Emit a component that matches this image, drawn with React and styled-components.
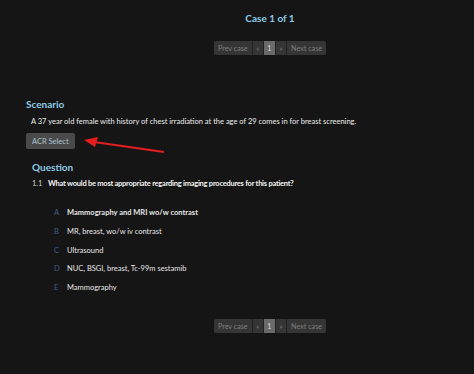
import React from "react";
import styled, { createGlobalStyle } from "styled-components";

const Global = createGlobalStyle`
  html, body {
    margin: 0;
    padding: 0;
    background: #151515;
    overflow: hidden;
  }
  body {
    font-family: Lato, "Open Sans", sans-serif;
    color: #e8e8e8;
  }
`;

const Page = styled.div`
  width: 488px;
  margin-left: 26px;
  padding-top: 11px;
  height: 374px;
`;

const CaseTitle = styled.div`
  text-align: center;
  color: #8ecae6;
  font-weight: 700;
  font-size: 10px;
  line-height: 14px;
`;

const Pager = styled.div`
  display: flex;
  justify-content: center;
  margin-top: ${(p) => p.$top}px;
`;

const PagerItem = styled.span`
  display: inline-flex;
  align-items: center;
  justify-content: center;
  height: 14px;
  padding: 0 ${(p) => (p.$narrow ? 3.5 : 4)}px;
  background: ${(p) => (p.$active ? "#6a6a6a" : "#353535")};
  color: ${(p) => (p.$active ? "#d8d8d8" : "#7e7e7e")};
  font-size: 7.2px;
  border-left: 1px solid #202020;
  &:first-child {
    border-left: none;
    border-radius: 2px 0 0 2px;
  }
  &:last-child {
    border-radius: 0 2px 2px 0;
  }
`;

const SectionTitle = styled.div`
  color: #8ecae6;
  font-weight: 700;
  font-size: 10px;
  line-height: 13px;
  margin-left: ${(p) => p.$indent || 0}px;
  margin-top: ${(p) => p.$top}px;
`;

const Text = styled.div`
  font-size: 7.5px;
  line-height: 11px;
  margin-left: 5px;
  margin-top: 5px;
  color: #ececec;
`;

const ButtonRow = styled.div`
  position: relative;
  display: flex;
  margin-top: 6px;
  height: 16px;
`;

const AcrButton = styled.button`
  height: 16px;
  padding: 0 6px;
  border: none;
  border-radius: 2px;
  background: #4a4a4a;
  color: #a9c4cf;
  font-family: Lato, sans-serif;
  font-size: 7.5px;
`;

const Arrow = styled.svg`
  position: absolute;
  left: 54px;
  top: 1px;
`;

const QuestionRow = styled.div`
  display: flex;
  margin-left: 6px;
  margin-top: 4px;
  font-size: 7.5px;
  line-height: 11px;
`;

const QNum = styled.span`
  width: 16px;
  color: #cfcfcf;
`;

const QText = styled.span`
  font-weight: 700;
  color: #f2f2f2;
  letter-spacing: -0.25px;
`;

const Options = styled.div`
  margin-left: 28px;
  margin-top: 18px;
  display: flex;
  flex-direction: column;
  gap: 7.8px;
`;

const Option = styled.div`
  display: flex;
  font-size: 7.5px;
  line-height: 11px;
`;

const Letter = styled.span`
  width: 13px;
  color: #3d5f80;
`;

const OptionText = styled.span`
  color: #e6e6e6;
  font-weight: ${(p) => (p.$bold ? 700 : 400)};
`;

const Pagination = ({ top }) => (
  <Pager $top={top}>
    <PagerItem>Prev case</PagerItem>
    <PagerItem $narrow>«</PagerItem>
    <PagerItem $narrow $active>1</PagerItem>
    <PagerItem $narrow>»</PagerItem>
    <PagerItem>Next case</PagerItem>
  </Pager>
);

const options = [
  ["A", "Mammography and MRI wo/w contrast", true],
  ["B", "MR, breast, wo/w iv contrast"],
  ["C", "Ultrasound"],
  ["D", "NUC, BSGI, breast, Tc-99m sestamib"],
  ["E", "Mammography"],
];

export default function App() {
  return (
    <>
      <Global />
      <Page>
        <CaseTitle>Case 1 of 1</CaseTitle>
        <Pagination top={16} />
        <SectionTitle $top={43}>Scenario</SectionTitle>
        <Text>
          A 37 year old female with history of chest irradiation at the age of 29 comes in for breast screening.
        </Text>
        <ButtonRow>
          <AcrButton>ACR Select</AcrButton>
          <Arrow width="90" height="24" viewBox="0 0 90 24">
            <line x1="84" y1="18" x2="14" y2="8" stroke="#e41e1e" strokeWidth="2.2" />
            <polygon points="4,6 18,3 15,13" fill="#e41e1e" />
          </Arrow>
        </ButtonRow>
        <SectionTitle $top={12} $indent={6}>Question</SectionTitle>
        <QuestionRow>
          <QNum>1.1</QNum>
          <QText>What would be most appropriate regarding imaging procedures for this patient?</QText>
        </QuestionRow>
        <Options>
          {options.map(([l, t, b]) => (
            <Option key={l}>
              <Letter>{l}</Letter>
              <OptionText $bold={b}>{t}</OptionText>
            </Option>
          ))}
        </Options>
        <Pagination top={26} />
      </Page>
    </>
  );
}
